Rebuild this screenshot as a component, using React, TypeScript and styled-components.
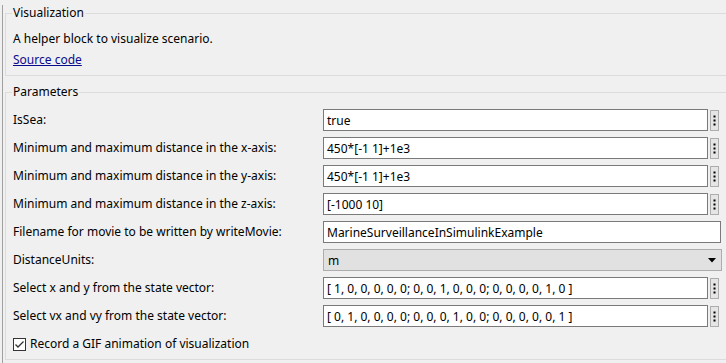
import React from 'react';
import styled, { createGlobalStyle } from 'styled-components';

const GlobalStyle = createGlobalStyle`
  html, body {
    margin: 0;
    padding: 0;
    background: #f0f0f0;
    overflow: hidden;
  }
  body {
    font-family: "Noto Sans", "Liberation Sans", sans-serif;
    font-size: 12px;
    color: #000;
  }
`;

const Pane = styled.div`
  width: 724px;
  height: 363px;
  margin-left: 2px;
  border-left: 1px solid #a0a0a0;
  padding-left: 2px;
  box-sizing: border-box;
`;

const Group = styled.fieldset<{ $top: number }>`
  margin: ${(p) => p.$top}px 0 0 0;
  padding: 0 5px 0 7px;
  border: 1px solid #dcdcdc;
  border-right: none;
  min-width: 0;
`;

const Legend = styled.legend`
  padding: 0 1px;
  margin-left: -1px;
  line-height: 16px;
  font-size: 12px;
`;

const Description = styled.div`
  padding-top: 10px;
  line-height: 16px;
`;

const SourceLink = styled.a`
  display: inline-block;
  margin-top: 5px;
  margin-bottom: 7px;
  line-height: 16px;
  color: #0a0a8c;
  text-decoration: underline;
  cursor: pointer;
`;

const ParamGrid = styled.div`
  display: grid;
  grid-template-columns: 310px 1fr;
  grid-auto-rows: 22px;
  row-gap: 6px;
  padding-top: 9px;
  padding-bottom: 4px;
`;

const Label = styled.div`
  display: flex;
  align-items: center;
  line-height: 16px;
  white-space: nowrap;
`;

const Field = styled.div`
  display: flex;
  align-items: stretch;
`;

const TextBox = styled.div`
  flex: 1;
  display: flex;
  align-items: center;
  padding-left: 3px;
  background: #fff;
  border: 1px solid #7a7a7a;
  white-space: nowrap;
  overflow: hidden;
`;

const DotsButton = styled.div`
  width: 9px;
  margin: 1px 2px 0 2px;
  box-sizing: border-box;
  border: 1px solid #adadad;
  background: #e5e5e5;
  display: flex;
  align-items: center;
  justify-content: center;
`;

const Dropdown = styled.div`
  flex: 1;
  display: flex;
  align-items: center;
  justify-content: space-between;
  padding: 0 5px 0 4px;
  margin-right: -1px;
  background: #e1e1e1;
  border: 1px solid #adadad;
`;

const CheckRow = styled.label`
  grid-column: 1 / -1;
  display: flex;
  align-items: center;
  gap: 4px;
  line-height: 16px;
`;

const Dots = () => (
  <svg width="3" height="11" viewBox="0 0 3 11">
    <rect x="0.5" y="0.5" width="2" height="2" fill="#000" />
    <rect x="0.5" y="4.5" width="2" height="2" fill="#000" />
    <rect x="0.5" y="8.5" width="2" height="2" fill="#000" />
  </svg>
);

const Arrow = () => (
  <svg width="8" height="5" viewBox="0 0 8 5">
    <path d="M0 0 H8 L4 4.5 Z" fill="#000" />
  </svg>
);

const CheckBox = () => (
  <svg width="13" height="13" viewBox="0 0 13 13">
    <rect x="0.5" y="0.5" width="12" height="12" fill="#fff" stroke="#333" />
    <path d="M2.5 6.5 L5 9 L10.5 3.5" fill="none" stroke="#333" strokeWidth="1.3" />
  </svg>
);

interface Param {
  label: string;
  value: string;
  kind: 'edit' | 'plain' | 'select';
}

const params: Param[] = [
  { label: 'IsSea:', value: 'true', kind: 'edit' },
  { label: 'Minimum and maximum distance in the x-axis:', value: '450*[-1 1]+1e3', kind: 'edit' },
  { label: 'Minimum and maximum distance in the y-axis:', value: '450*[-1 1]+1e3', kind: 'edit' },
  { label: 'Minimum and maximum distance in the z-axis:', value: '[-1000 10]', kind: 'edit' },
  { label: 'Filename for movie to be written by writeMovie:', value: 'MarineSurveillanceInSimulinkExample', kind: 'plain' },
  { label: 'DistanceUnits:', value: 'm', kind: 'select' },
  { label: 'Select x and y from the state vector:', value: '[ 1, 0, 0, 0, 0, 0; 0, 0, 1, 0, 0, 0; 0, 0, 0, 0, 1, 0 ]', kind: 'edit' },
  { label: 'Select vx and vy from the state vector:', value: '[ 0, 1, 0, 0, 0, 0; 0, 0, 0, 1, 0, 0; 0, 0, 0, 0, 0, 1 ]', kind: 'edit' },
];

const App: React.FC = () => {
  return (
    <>
      <GlobalStyle />
      <Pane>
        <Group $top={5}>
          <Legend>Visualization</Legend>
          <Description>A helper block to visualize scenario.</Description>
          <SourceLink>Source code</SourceLink>
        </Group>
        <Group $top={8}>
          <Legend>Parameters</Legend>
          <ParamGrid>
            {params.map((p) => (
              <React.Fragment key={p.label}>
                <Label>{p.label}</Label>
                <Field>
                  {p.kind === 'select' ? (
                    <Dropdown>
                      <span>{p.value}</span>
                      <Arrow />
                    </Dropdown>
                  ) : (
                    <TextBox>{p.value}</TextBox>
                  )}
                  {p.kind === 'edit' && (
                    <DotsButton>
                      <Dots />
                    </DotsButton>
                  )}
                </Field>
              </React.Fragment>
            ))}
            <CheckRow>
              <CheckBox />
              Record a GIF animation of visualization
            </CheckRow>
          </ParamGrid>
        </Group>
      </Pane>
    </>
  );
};

export default App;
